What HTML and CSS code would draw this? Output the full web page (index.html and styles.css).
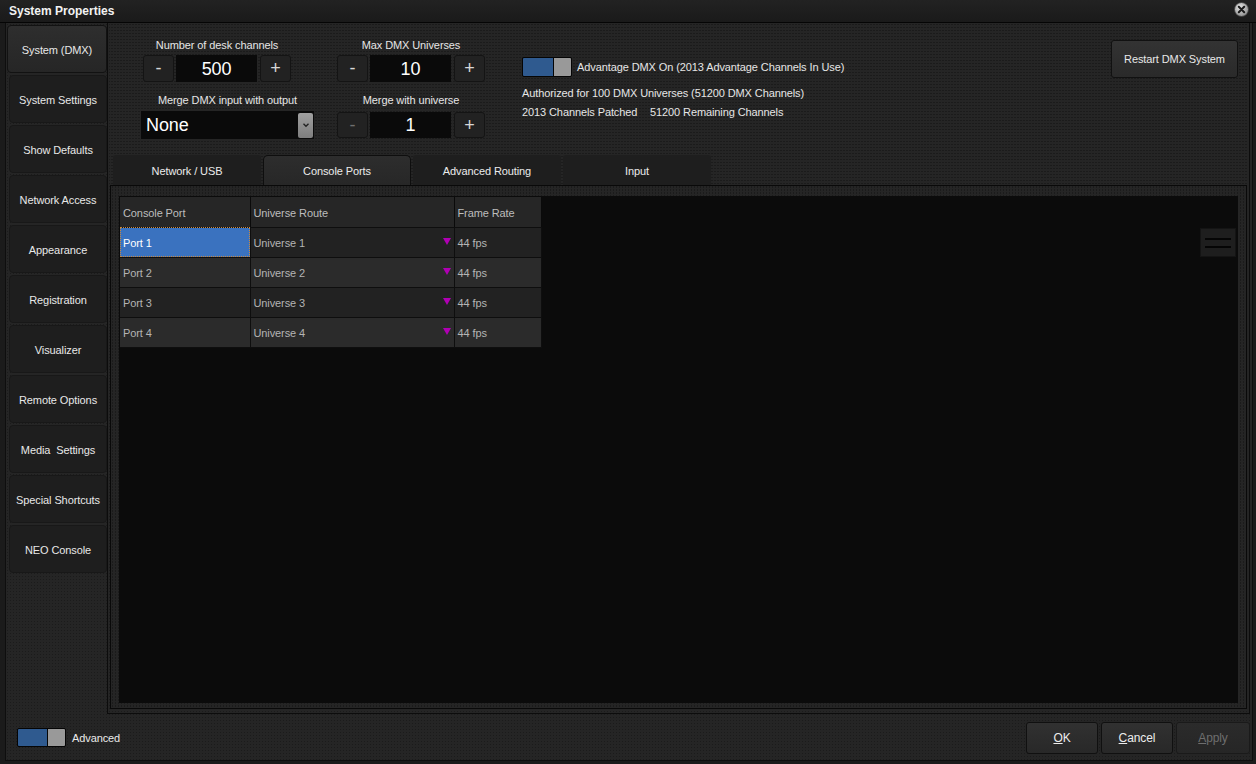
FILE: index.html
```html
<!DOCTYPE html>
<html lang="en">
<head>
    <meta charset="UTF-8">
    <meta name="viewport" content="width=device-width, initial-scale=1.0">
    <title>System Properties</title>
    <link rel="stylesheet" href="styles.css">
</head>
<body>
<div class="window">
    <div class="titlebar">
        <span class="title">System Properties</span>
        <span class="close">
            <svg width="15" height="15" viewBox="0 0 15 15">
                <defs>
                    <radialGradient id="cg" cx="40%" cy="35%" r="70%">
                        <stop offset="0" stop-color="#e6e6e6"/>
                        <stop offset="1" stop-color="#8a8a8a"/>
                    </radialGradient>
                </defs>
                <circle cx="7.5" cy="7.5" r="7" fill="url(#cg)" stroke="#3a3a3a" stroke-width="0.8"/>
                <path d="M4.8 4.8 L10.2 10.2 M10.2 4.8 L4.8 10.2" stroke="#1a1a1a" stroke-width="2" stroke-linecap="round"/>
            </svg>
        </span>
    </div>

    <div class="frame">
        <div class="main">
            <!-- side menu -->
            <div class="sidebar">
                <div class="side-btn active">System (DMX)</div>
                <div class="side-btn">System Settings</div>
                <div class="side-btn">Show Defaults</div>
                <div class="side-btn">Network Access</div>
                <div class="side-btn">Appearance</div>
                <div class="side-btn">Registration</div>
                <div class="side-btn">Visualizer</div>
                <div class="side-btn">Remote Options</div>
                <div class="side-btn">Media&nbsp; Settings</div>
                <div class="side-btn">Special Shortcuts</div>
                <div class="side-btn">NEO Console</div>
            </div>

            <div class="content">
                <!-- top settings -->
                <div class="top">
                    <div class="col col-desk">
                        <div class="field">
                            <div class="label">Number of desk channels</div>
                            <div class="spinner">
                                <div class="spin-btn">-</div>
                                <div class="spin-value">500</div>
                                <div class="spin-btn">+</div>
                            </div>
                        </div>
                        <div class="label label-merge">Merge DMX input with output</div>
                        <div class="dropdown">
                            <span>None</span>
                            <span class="drop-arrow">
                                <svg width="8" height="6" viewBox="0 0 8 6"><path d="M1.5 1.8 L4 4.3 L6.5 1.8" fill="none" stroke="#222" stroke-width="1.4"/></svg>
                            </span>
                        </div>
                    </div>

                    <div class="col col-univ">
                        <div class="field">
                            <div class="label">Max DMX Universes</div>
                            <div class="spinner">
                                <div class="spin-btn">-</div>
                                <div class="spin-value">10</div>
                                <div class="spin-btn">+</div>
                            </div>
                        </div>
                        <div class="field field-merge">
                            <div class="label">Merge with universe</div>
                            <div class="spinner">
                                <div class="spin-btn disabled">-</div>
                                <div class="spin-value">1</div>
                                <div class="spin-btn">+</div>
                            </div>
                        </div>
                    </div>

                    <div class="col col-info">
                        <div class="toggle-row">
                            <div class="toggle"><span class="toggle-fill"></span><span class="toggle-knob"></span></div>
                            <span>Advantage DMX On (2013 Advantage Channels In Use)</span>
                        </div>
                        <div class="info-line">Authorized for 100 DMX Universes (51200 DMX Channels)</div>
                        <div class="info-line info-split">
                            <span class="patched">2013 Channels Patched</span>
                            <span>51200 Remaining Channels</span>
                        </div>
                    </div>

                    <div class="restart-btn">Restart DMX System</div>
                </div>

                <!-- tabs -->
                <div class="tabs">
                    <div class="tab">Network / USB</div>
                    <div class="tab active">Console Ports</div>
                    <div class="tab">Advanced Routing</div>
                    <div class="tab">Input</div>
                </div>

                <div class="panel">
                    <div class="panel-inner">
                        <table class="grid">
                            <colgroup>
                                <col class="c-port">
                                <col class="c-route">
                                <col class="c-rate">
                            </colgroup>
                            <thead>
                                <tr><th>Console Port</th><th>Universe Route</th><th>Frame Rate</th></tr>
                            </thead>
                            <tbody>
                                <tr>
                                    <td class="selected">Port 1</td>
                                    <td><div class="route"><span>Universe 1</span><span class="tri"></span></div></td>
                                    <td>44 fps</td>
                                </tr>
                                <tr class="alt">
                                    <td>Port 2</td>
                                    <td><div class="route"><span>Universe 2</span><span class="tri"></span></div></td>
                                    <td>44 fps</td>
                                </tr>
                                <tr>
                                    <td>Port 3</td>
                                    <td><div class="route"><span>Universe 3</span><span class="tri"></span></div></td>
                                    <td>44 fps</td>
                                </tr>
                                <tr class="alt">
                                    <td>Port 4</td>
                                    <td><div class="route"><span>Universe 4</span><span class="tri"></span></div></td>
                                    <td>44 fps</td>
                                </tr>
                            </tbody>
                        </table>
                        <!-- column menu grip -->
                        <div class="grip"><span></span><span></span></div>
                    </div>
                </div>
            </div>
        </div>

        <div class="footer">
            <div class="toggle small"><span class="toggle-fill"></span><span class="toggle-knob"></span></div>
            <span class="footer-label">Advanced</span>
            <div class="footer-btns">
                <div class="dlg-btn"><u>O</u>K</div>
                <div class="dlg-btn"><u>C</u>ancel</div>
                <div class="dlg-btn disabled"><u>A</u>pply</div>
            </div>
        </div>
    </div>
</div>
</body>
</html>
```

FILE: styles.css
```css
* {
    box-sizing: border-box;
}
body {
    margin: 0;
    background-color: #1b1b1b;
    font-family: "Liberation Sans", Arial, sans-serif;
    font-size: 11px;
    letter-spacing: -0.1px;
    color: #e6e6e6;
}
.window {
    width: 1256px;
    height: 764px;
    background-color: #1b1b1b;
    overflow: hidden;
}

/* Title bar */
.titlebar {
    height: 23px;
    display: flex;
    align-items: center;
    justify-content: space-between;
    padding: 0 7px 1px 9px;
    background: linear-gradient(#222, #1a1a1a);
    border-bottom: 1px solid #050505;
}
.title {
    font-weight: bold;
    font-size: 12px;
    letter-spacing: 0;
    color: #f2f2f2;
}
.close {
    display: flex;
    margin-top: -2px;
}

/* textured frame */
.frame,
.top,
.tabs,
.panel {
    background-color: #252525;
    background-image: radial-gradient(circle, #1b1b1b 0.8px, transparent 1px);
    background-size: 3px 3px;
}
.frame {
    height: 738px;
    margin: 0 3px 0 5px;
    padding: 0 2px 0 3px;
    border: 1px solid #0e0e0e;
    border-top: none;
}
.main {
    height: 691px;
    display: flex;
}

/* sidebar */
.sidebar {
    width: 98px;
    padding-top: 2px;
    display: flex;
    flex-direction: column;
    gap: 2px;
}
.side-btn {
    height: 48px;
    display: flex;
    align-items: center;
    justify-content: center;
    padding-top: 2px;
    background-color: #1e1e1e;
    border: 1px solid #181818;
    border-radius: 4px;
    color: #e8e8e8;
    white-space: nowrap;
}
.side-btn.active {
    background: linear-gradient(#2e2e2e, #262626);
    border-color: #121212;
    margin-left: -2px;
}

/* content */
.content {
    flex: 1;
    display: flex;
    flex-direction: column;
    border-left: 1px solid #0c0c0c;
    border-right: 1px solid #0c0c0c;
    border-bottom: 1px solid #0c0c0c;
    padding: 0 2px 4px 2px;
}
.top {
    height: 132px;
    display: flex;
    align-items: flex-start;
    padding: 15px 9px 0 31px;
    background-color: transparent;
}
.label {
    height: 14px;
    line-height: 14px;
    text-align: center;
    color: #e6e6e6;
    white-space: nowrap;
}
.col-desk {
    width: 173px;
}
.col-desk .field {
    margin-left: 2px;
}
.field {
    width: 148px;
}
.spinner {
    display: flex;
    height: 27px;
    margin-top: 3px;
}
.spin-btn {
    width: 31px;
    display: flex;
    align-items: center;
    justify-content: center;
    background-color: #222;
    border: 1px solid #141414;
    border-radius: 3px;
    font-size: 18px;
    color: #d8d8d8;
}
.spin-btn.disabled {
    color: #6f6f6f;
}
.spin-value {
    width: 81px;
    margin: 0 3px 0 2px;
    display: flex;
    align-items: center;
    justify-content: center;
    padding-top: 1px;
    background-color: #0a0a0a;
    font-size: 18px;
    color: #fff;
}
.label-merge {
    margin-top: 11px;
}
.dropdown {
    height: 28px;
    margin-top: 4px;
    display: flex;
    align-items: center;
    justify-content: space-between;
    padding: 0 1px 0 5px;
    background-color: #0a0a0a;
    font-size: 18px;
    color: #fff;
}
.drop-arrow {
    width: 15px;
    height: 25px;
    display: flex;
    align-items: center;
    justify-content: center;
    background: linear-gradient(#a0a0a0, #7e7e7e);
    border-radius: 2px;
}
.col-univ {
    margin-left: 23px;
}
.field-merge {
    margin-top: 11px;
}
.field-merge .spinner {
    margin-top: 5px;
    height: 26px;
}
.col-info {
    margin-left: 37px;
    margin-top: 19px;
}
.toggle-row {
    display: flex;
    align-items: center;
    gap: 5px;
}
.toggle {
    width: 50px;
    height: 20px;
    display: flex;
    border: 1px solid #050505;
    border-radius: 2px;
    background-color: #050505;
}
.toggle.small {
    width: 49px;
    height: 19px;
}
.toggle-fill {
    flex: 1;
    background-color: #2f5a8f;
    border-radius: 1px 0 0 1px;
}
.toggle-knob {
    width: 17px;
    margin-left: 1px;
    background-color: #999;
    border-radius: 0 1px 1px 0;
}
.info-line {
    line-height: 14px;
    margin-top: 9px;
}
.info-split {
    display: flex;
    margin-top: 5px;
}
.patched {
    width: 128px;
}
.restart-btn {
    margin-left: auto;
    margin-top: 2px;
    width: 127px;
    height: 38px;
    display: flex;
    align-items: center;
    justify-content: center;
    background: linear-gradient(#333, #2a2a2a);
    border: 1px solid #111;
    border-radius: 3px;
    color: #e8e8e8;
}

/* tabs */
.tabs {
    height: 30px;
    display: flex;
    gap: 2px;
    padding-left: 3px;
    background-color: transparent;
}
.tab {
    width: 148px;
    display: flex;
    align-items: center;
    justify-content: center;
    padding-top: 2px;
    background-color: #1e1e1e;
    border-radius: 3px 3px 0 0;
    color: #ececec;
}
.tab.active {
    background: linear-gradient(#2d2d2d, #272727);
    border: 1px solid #0e0e0e;
    border-bottom: none;
    border-radius: 5px 5px 0 0;
    padding-top: 0;
}

/* tab panel */
.panel {
    flex: 1;
    border: 1px solid #090909;
    padding: 10px 8px 5px 8px;
    background-color: transparent;
}
.panel-inner {
    position: relative;
    height: 100%;
    background-color: #0b0b0b;
    padding: 1px 0 0 1px;
}
.grid {
    border-collapse: collapse;
    table-layout: fixed;
    width: 421px;
    color: #b4b4b4;
}
.c-port { width: 130px; }
.c-route { width: 204px; }
.c-rate { width: 87px; }
.grid th,
.grid td {
    height: 30px;
    padding: 2px 0 0 3px;
    text-align: left;
    font-weight: normal;
    border-right: 1px solid #0e0e0e;
    border-bottom: 1px solid #0e0e0e;
    white-space: nowrap;
}
.grid th {
    background-color: #262626;
    color: #bdbdbd;
    border-right-color: #0a0a0a;
}
.grid tbody tr {
    background-color: #222;
}
.grid tbody tr.alt {
    background-color: #2b2b2b;
}
.grid td.selected {
    background-color: #3a72bf;
    color: #fff;
    outline: 1px dotted #c9883c;
    outline-offset: -1px;
}
.route {
    display: flex;
    align-items: center;
    justify-content: space-between;
    padding-right: 3px;
}
.tri {
    width: 0;
    height: 0;
    margin-top: -4px;
    border-left: 4.5px solid transparent;
    border-right: 4.5px solid transparent;
    border-top: 7px solid #b000b4;
}
.grip {
    position: absolute;
    top: 32px;
    right: 2px;
    width: 36px;
    height: 29px;
    display: flex;
    flex-direction: column;
    align-items: center;
    justify-content: center;
    gap: 6px;
    background-color: #1e1e1e;
    border: 1px solid #141414;
}
.grip span {
    width: 26px;
    height: 2px;
    background-color: #050505;
}

/* footer */
.footer {
    height: 46px;
    display: flex;
    align-items: center;
    padding: 1px 0 0 8px;
}
.footer-label {
    margin-left: 6px;
    color: #eaeaea;
}
.footer-btns {
    margin-left: auto;
    display: flex;
    gap: 3px;
}
.dlg-btn {
    width: 72px;
    height: 32px;
    display: flex;
    align-items: center;
    justify-content: center;
    background: linear-gradient(#313131, #282828);
    border: 1px solid #101010;
    border-radius: 3px;
    font-size: 12px;
    color: #ececec;
}
.dlg-btn.disabled {
    width: 74px;
    background: linear-gradient(#2b2b2b, #262626);
    color: #6e6e6e;
    border-color: #1a1a1a;
}
```
